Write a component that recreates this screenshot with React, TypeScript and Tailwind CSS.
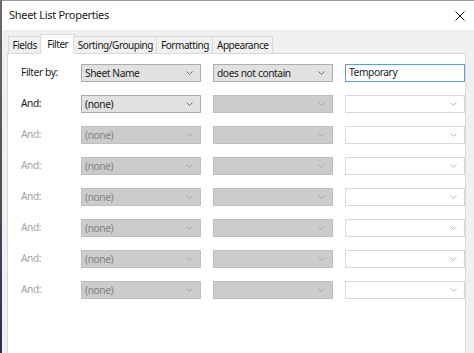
import React from "react";

function Chevron({ color }: { color: string }) {
  return (
    <svg width="7" height="4" viewBox="0 0 7 4" className="shrink-0">
      <path d="M0.5 0.5 L3.5 3.5 L6.5 0.5" fill="none" stroke={color} strokeWidth="1" />
    </svg>
  );
}

function Select({
  text,
  variant,
}: {
  text?: string;
  variant: "enabled" | "disabled" | "empty";
}) {
  const cls =
    variant === "enabled"
      ? "bg-[#e1e1e1] border-[#adadad] text-[#1a1a1a]"
      : variant === "disabled"
      ? "bg-[#cccccc] border-[#bfbfbf] text-[#838383]"
      : "bg-white border-[#d9d9d9] text-[#1a1a1a]";
  const chev =
    variant === "enabled" ? "#707070" : variant === "disabled" ? "#a6a6a6" : "#b5b5b5";
  return (
    <div
      className={`w-[120px] h-[18px] border flex items-center justify-between pl-[3px] pr-[7px] ${cls}`}
    >
      <span className="leading-none">{text ?? ""}</span>
      <Chevron color={chev} />
    </div>
  );
}

function Row({
  label,
  labelDisabled,
  a,
  b,
  c,
}: {
  label: string;
  labelDisabled?: boolean;
  a: React.ReactNode;
  b: React.ReactNode;
  c: React.ReactNode;
}) {
  return (
    <div className="flex items-center h-[18px]">
      <div
        className={`w-[73px] pl-[13px] ${labelDisabled ? "text-[#a3a3a3]" : "text-[#1a1a1a]"}`}
      >
        {label}
      </div>
      <div className="flex gap-[12px]">
        {a}
        {b}
        {c}
      </div>
    </div>
  );
}

export default function App() {
  const tabs = ["Fields", "Filter", "Sorting/Grouping", "Formatting", "Appearance"];
  return (
    <div
      className="w-[474px] h-[353px] flex overflow-hidden bg-[#f0f0f0] text-[10.2px] tracking-[-0.4px]"
      style={{ fontFamily: '"Noto Sans", "Open Sans", sans-serif' }}
    >
      <div className="w-[2px] h-full bg-[linear-gradient(#6b6b6b,#4a4a5a_60%,#2b2b55)]" />
      <div className="flex-1 flex flex-col">
        <div className="h-[1px] bg-[#9a9a9a]" />
        <div className="h-[29px] bg-white flex items-center justify-between pl-[7px] pr-[9px]">
          <span className="text-[11px] tracking-[-0.3px] text-[#1a1a1a]">Sheet List Properties</span>
          <svg width="10" height="10" viewBox="0 0 10 10">
            <path d="M0.5 0.5 L9.5 9.5 M9.5 0.5 L0.5 9.5" stroke="#222" strokeWidth="1" />
          </svg>
        </div>
        <div className="flex-1 flex flex-col pl-[5px] pr-[8px] pt-[5px]">
          <div className="flex items-end h-[18px] pl-[1px] relative z-10 text-[10px] tracking-[-0.45px]">
            {tabs.map((t) =>
              t === "Filter" ? (
                <div
                  key={t}
                  className="h-[20px] -mb-[1px] px-[6px] bg-white border border-b-0 border-[#d9d9d9] flex items-start pt-[2px] text-[#1a1a1a] -mx-[1px]"
                >
                  {t}
                </div>
              ) : (
                <div
                  key={t}
                  className="h-[17px] px-[3.5px] bg-[#f0f0f0] border border-b-0 border-[#d9d9d9] flex items-center text-[#1a1a1a] -ml-[1px] first:ml-0"
                >
                  {t}
                </div>
              )
            )}
          </div>
          <div className="flex-1 bg-white border border-[#d9d9d9] border-b-0 pt-[10px] flex flex-col gap-[13px]">
            <Row
              label="Filter by:"
              a={<Select variant="enabled" text="Sheet Name" />}
              b={<Select variant="enabled" text="does not contain" />}
              c={
                <div className="w-[120px] h-[18px] border border-[#5a9fdc] bg-white flex items-center pl-[3px] text-[#1a1a1a]">
                  Temporary
                </div>
              }
            />
            <Row
              label="And:"
              a={<Select variant="enabled" text="(none)" />}
              b={<Select variant="disabled" />}
              c={<Select variant="empty" />}
            />
            {[0, 1, 2, 3, 4, 5].map((i) => (
              <Row
                key={i}
                label="And:"
                labelDisabled
                a={<Select variant="disabled" text="(none)" />}
                b={<Select variant="disabled" />}
                c={<Select variant="empty" />}
              />
            ))}
          </div>
        </div>
      </div>
    </div>
  );
}
